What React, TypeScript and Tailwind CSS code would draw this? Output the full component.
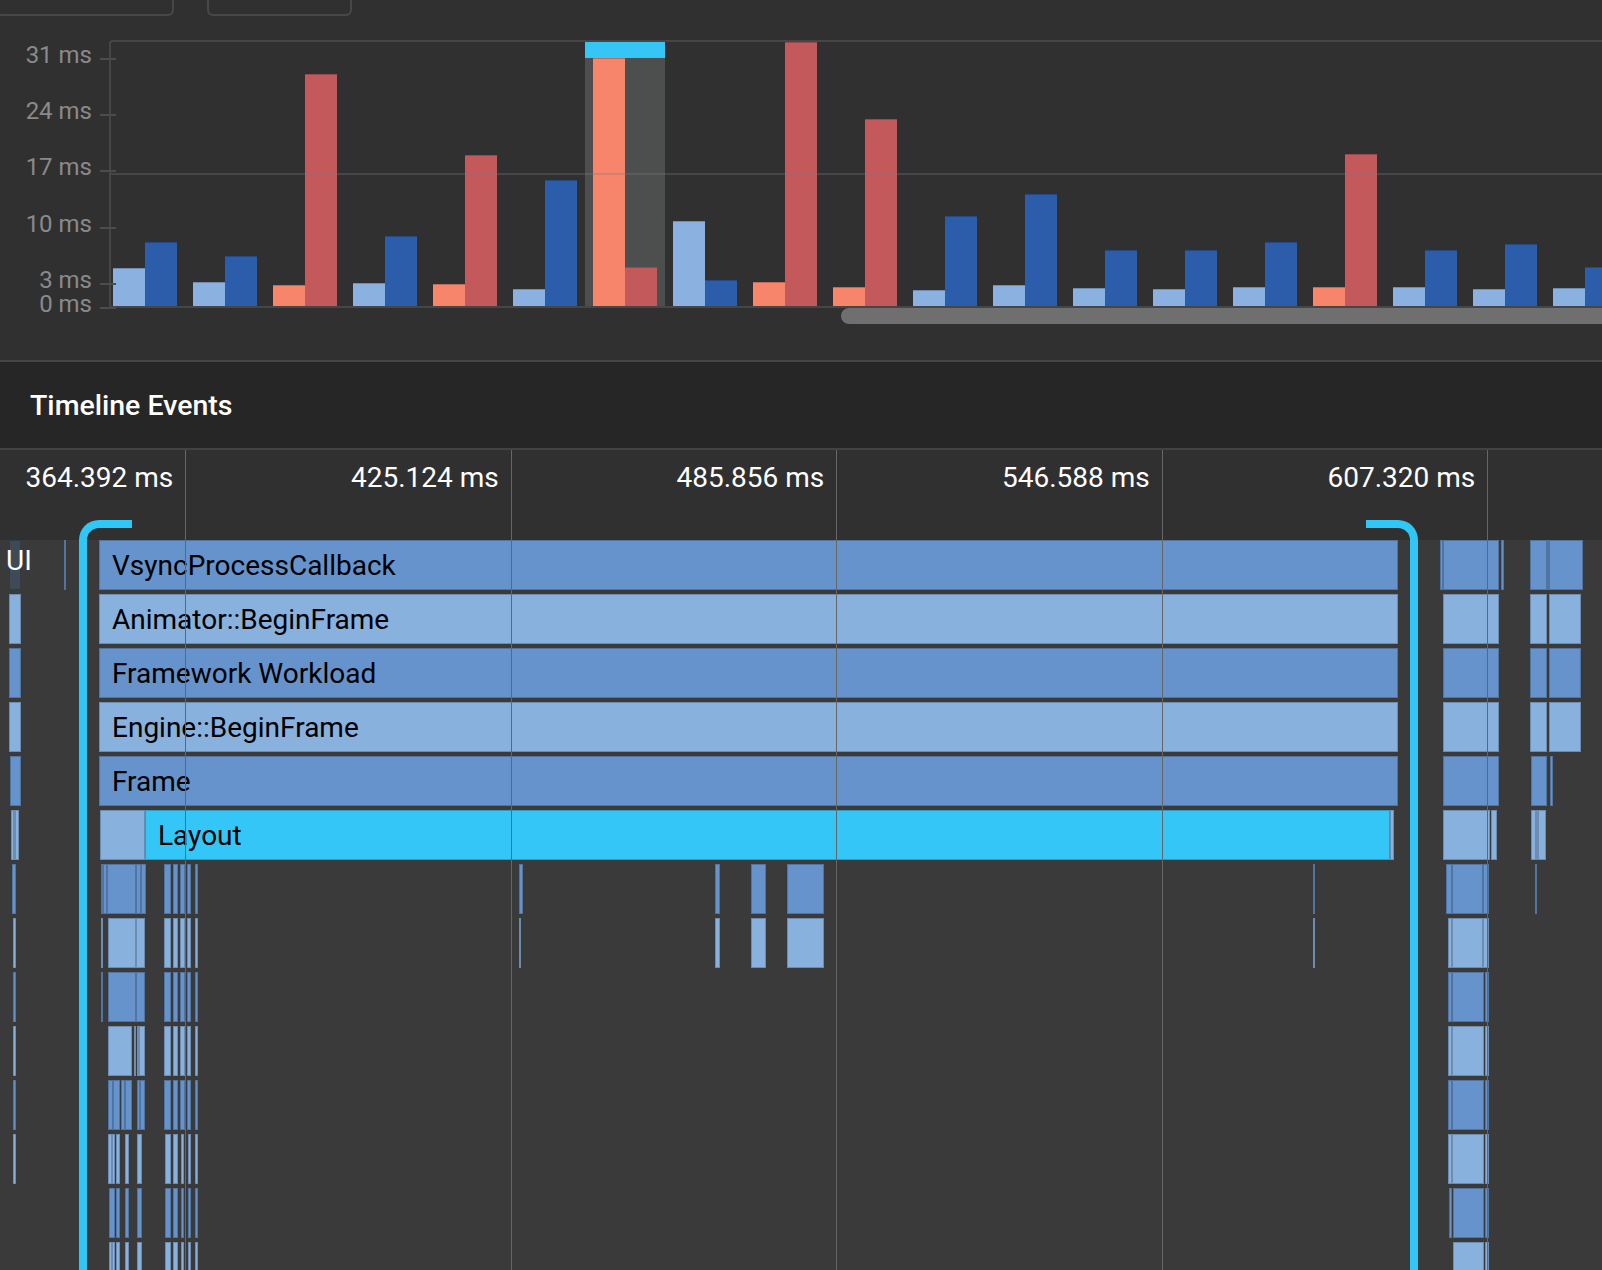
type Span = [number, number];

const FRAMES = [
  { a: 268, b: 241.5, jank: false }, { a: 282, b: 256, jank: false }, { a: 285, b: 73.5, jank: true },
  { a: 283, b: 235.5, jank: false }, { a: 284, b: 155, jank: true }, { a: 289, b: 180, jank: false },
  { a: 58, b: 267, jank: true, selected: true }, { a: 221, b: 280, jank: false }, { a: 282, b: 42, jank: true },
  { a: 287, b: 119, jank: true }, { a: 290, b: 215.5, jank: false }, { a: 285, b: 194, jank: false },
  { a: 288, b: 250, jank: false }, { a: 289, b: 250, jank: false }, { a: 287, b: 242, jank: false },
  { a: 287, b: 154, jank: true }, { a: 287, b: 250, jank: false }, { a: 289, b: 244, jank: false },
  { a: 288, b: 267, jank: false },
];

const TICKS = [
  { label: "31 ms", y: 58, text: 55 }, { label: "24 ms", y: 114, text: 111 }, { label: "17 ms", y: 170, text: 167 },
  { label: "10 ms", y: 227, text: 224 }, { label: "3 ms", y: 283, text: 280 }, { label: "0 ms", y: 307, text: 304 },
];

const RULER = ["425.124 ms", "485.856 ms", "546.588 ms", "607.320 ms"];
const GRID = [185.3, 510.7, 836.2, 1161.7, 1487.2];

const clusterB: Span[] = [[164.3, 171], [172.7, 178], [180.3, 185.3], [187.3, 191], [195, 198]];
const clusterBNarrow: Span[] = [[165, 171], [172.7, 178], [180.7, 184], [187.7, 191], [195, 198]];
const clusterC: Span[] = [[1448, 1451.7], [1452.3, 1484.3], [1485.3, 1489]];

// every row of the flame chart, x ranges in page pixels
const ROWS: Span[][] = [
  [[64, 66], [1440, 1442.5], [1442.5, 1499.3], [1501, 1503.7], [1530.3, 1546.7], [1546.7, 1549.3], [1549.3, 1582.7]],
  [[9.3, 20.7], [1442.7, 1499.3], [1530.3, 1547], [1549.3, 1581]],
  [[9.3, 20.7], [1442.7, 1499.3], [1530.3, 1547], [1549.3, 1581]],
  [[9.3, 20.7], [1442.7, 1499.3], [1530.3, 1547], [1549.3, 1580.7]],
  [[10, 20.7], [1443, 1499.3], [1531.3, 1547], [1550.3, 1553.3]],
  [[11, 14], [14, 15], [15, 19.3], [1443, 1490], [1490.7, 1497], [1531.3, 1536], [1536, 1538], [1538, 1546]],
  [[11.7, 15.7], [101, 103.3], [103.3, 106.7], [106.7, 136.3], [136.3, 140.7], [140.7, 145.7], ...clusterB, [519, 522.7], [715, 719.7], [751, 765.7], [787.3, 824], [1312.5, 1314], [1446, 1452], [1452, 1483], [1483, 1489], [1535, 1536]],
  [[13, 15.7], [101, 103], [108, 136], [136, 145], ...clusterB, [519, 521], [715, 719.7], [751, 765.7], [787.3, 824], [1312.5, 1314], [1448, 1452], [1452, 1483], [1483, 1489]],
  [[13, 15.7], [101, 103], [108, 136], [136, 145], ...clusterB, ...clusterC],
  [[13, 15.7], [108.3, 132], [134, 135.7], [137, 139], [139, 145], ...clusterB, ...clusterC],
  [[13, 15.7], [108.3, 113], [113, 119.7], [121.3, 125], [125, 132], [137, 140], [140, 145], ...clusterB, ...clusterC],
  [[13, 15.7], [108.3, 112], [112, 115], [116, 119.7], [125.3, 128.7], [137, 141.7], ...clusterBNarrow, ...clusterC],
  [[108.7, 114.7], [116, 119.7], [125.3, 128.7], [137.3, 141.7], ...clusterBNarrow, [1449, 1452], [1452.7, 1484.3], [1485.3, 1489]],
  [[109, 112], [112, 114.7], [116, 119.7], [125.3, 128.7], [137.3, 141.7], ...clusterBNarrow, [1453, 1484.3], [1485.3, 1489]],
];

const TITLES = ["VsyncProcessCallback", "Animator::BeginFrame", "Framework Workload", "Engine::BeginFrame", "Frame"];

function Bar({ top, color }: { top: number; color: string }) {
  return <div className={`w-8 shrink-0 border-t border-black/20 ${color}`} style={{ height: 306 - top }} />;
}

function FrameBars() {
  return (
    <div className="flex h-full items-end gap-4 pl-[2px]">
      {FRAMES.map((f, i) => (
        <div key={i} className="relative flex h-full w-16 shrink-0 items-end">
          {f.selected && (
            <div className="absolute -inset-x-2 inset-y-0 border-t-[16px] border-[#36c6f6] bg-[#4d4f4e]" />
          )}
          <div className="relative flex items-end">
            <Bar top={f.a} color={f.jank ? "bg-[#f7856c]" : "bg-[#8ab1df]"} />
            <Bar top={f.b} color={f.jank ? "bg-[#c3595b]" : "bg-[#2c5dab]"} />
          </div>
        </div>
      ))}
    </div>
  );
}

function Seg({ span, color, dim }: { span: Span; color: string; dim?: boolean }) {
  return (
    <div
      className={`absolute inset-y-0 border border-black/20 ${dim ? "bg-[#3f4a57]" : color}`}
      style={{ left: span[0], width: span[1] - span[0] }}
    />
  );
}

function Row({ index }: { index: number }) {
  const color = index % 2 === 0 ? "bg-[#6693cc]" : "bg-[#88b1de]";
  return (
    <div className="relative h-[50px] shrink-0">
      {ROWS[index].map((s, i) => (
        <Seg key={i} span={s} color={color} />
      ))}
      {index < 5 && (
        <div className={`absolute inset-y-0 left-[99px] flex w-[1299px] items-center border border-black/20 pl-3 pt-[2px] text-black ${color}`}>
          {TITLES[index]}
        </div>
      )}
      {index === 5 && (
        <>
          <Seg span={[100, 145]} color="bg-[#88b1de]" />
          <div className="absolute inset-y-0 left-[145px] flex w-[1245px] items-center border border-black/20 bg-[#34c6f6] pl-3 pt-[2px] text-black">
            Layout
          </div>
          <Seg span={[1390, 1394]} color="bg-[#88b1de]" />
        </>
      )}
      {index === 0 && (
        <>
          <Seg span={[9.3, 20.7]} color="" dim />
          <span className="absolute left-[6px] top-0 text-white">UI</span>
        </>
      )}
    </div>
  );
}

export default function App() {
  return (
    <div className="flex h-[1270px] w-full flex-col overflow-hidden bg-[#3a3a3a] font-[family-name:Roboto,sans-serif]">
      <section className="h-[362px] shrink-0 overflow-hidden border-b-2 border-[#464646] bg-[#303030]">
        <div className="flex h-10 items-start gap-[33px]">
          <div className="-ml-1 -mt-3 h-7 w-[178px] rounded-md border-2 border-[#484848]" />
          <div className="-mt-3 h-7 w-[145px] rounded-md border-2 border-[#484848]" />
        </div>
        <div className="relative ml-[109px] h-[268px] w-[1600px] rounded-l-[4px] border-2 border-r-0 border-[#464646]">
          <FrameBars />
          <div className="absolute inset-x-0 top-[130.5px] h-[2px] bg-[#7a7a7a]/30" />
          {TICKS.map((t) => (
            <div key={t.label}>
              <div className="absolute -left-[11px] h-[2px] w-4 bg-[#4c4c4c]" style={{ top: t.y - 42 }} />
              <span
                className="absolute right-[calc(100%+19px)] -translate-y-1/2 text-[24px] leading-none whitespace-nowrap text-[#8a8a8a]"
                style={{ top: t.text - 42 }}
              >
                {t.label}
              </span>
            </div>
          ))}
        </div>
        <div className="ml-[841px] h-4 rounded-l-full bg-[#6f6f6f]" />
      </section>

      <header className="flex h-[88px] shrink-0 items-center border-b-2 border-[#424242] bg-[#262626] pl-[30px] pt-[2px]">
        <h2 className="text-[28.5px] leading-none font-medium text-white">Timeline Events</h2>
      </header>

      <div className="relative min-h-0 flex-1 overflow-hidden text-[28px]">
        <div className="flex h-[90px] bg-[#303030] pt-[7px] text-white">
          <div className="flex w-[185.3px] shrink-0 justify-end pr-3">364.392 ms</div>
          {RULER.map((t) => (
            <div key={t} className="flex w-[325.5px] shrink-0 justify-end pr-3">{t}</div>
          ))}
        </div>
        <div className="flex flex-col gap-1">
          {ROWS.map((_, i) => (
            <Row key={i} index={i} />
          ))}
        </div>
        {GRID.map((x) => (
          <div key={x} className="absolute inset-y-0 w-px bg-[#666666]" style={{ left: x }} />
        ))}
        <div className="absolute -bottom-2 left-[79px] top-[70px] w-[53px] rounded-tl-[20px] border-l-8 border-t-8 border-[#30c6f5]" />
        <div className="absolute -bottom-2 left-[1366px] top-[70px] w-[52px] rounded-tr-[20px] border-r-8 border-t-8 border-[#30c6f5]" />
      </div>
    </div>
  );
}
